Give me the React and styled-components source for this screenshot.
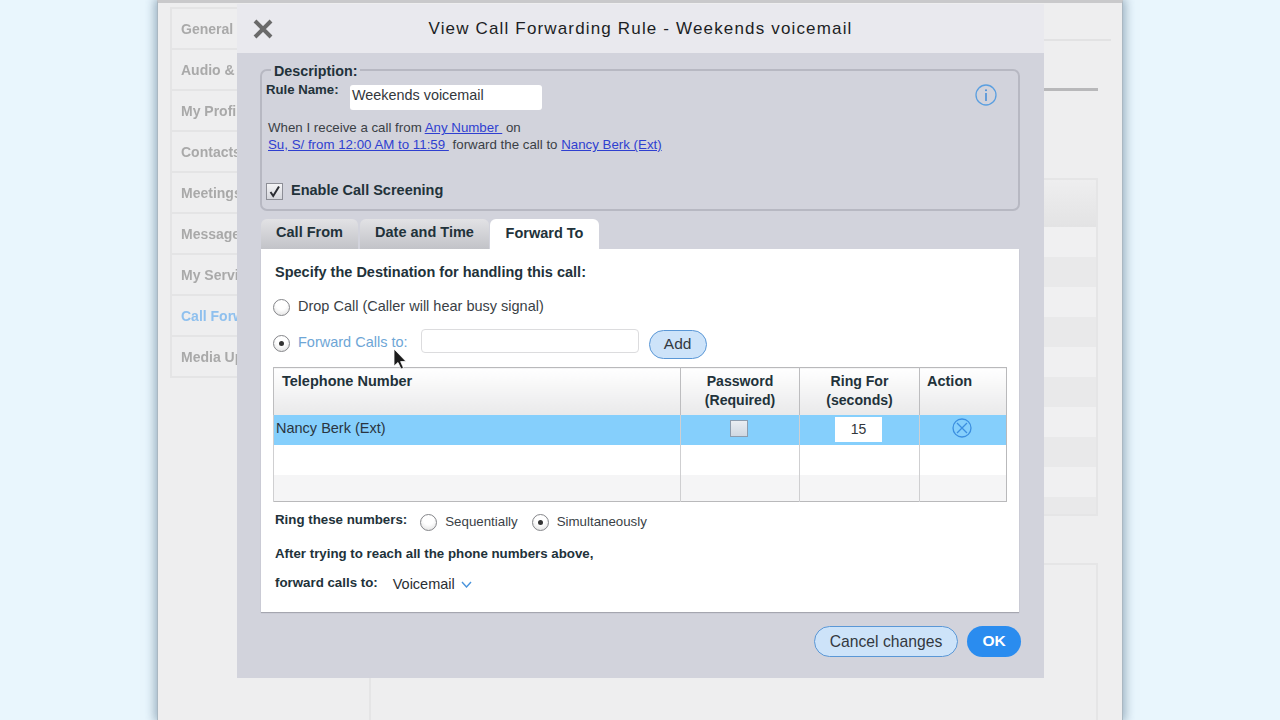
import React from "react";
import styled, { createGlobalStyle } from "styled-components";

const GlobalStyle = createGlobalStyle`
  html, body {
    margin: 0;
    height: 100%;
    overflow: hidden;
    background: #e9f6fd;
    font-family: "Liberation Sans", Arial, sans-serif;
  }
`;

const Stage = styled.div`
  position: relative;
  width: 1280px;
  height: 720px;
  overflow: hidden;
`;
const Win = styled.div`
  box-sizing: border-box;
  width: 966px;
  height: 720px;
  margin-left: 157px;
  display: flex;
  background: #eeeeef;
  border-top: 3px solid #c9c9cb;
  border-left: 1px solid #aab8c2;
  border-right: 1px solid #aab8c2;
  box-shadow: 0 0 10px 2px rgba(120, 145, 165, 0.75);
`;
const Nav = styled.div`
  width: 180px;
  margin: 4px 0 0 12px;
  filter: blur(0.6px);
  flex-shrink: 0;
`;
const NavItem = styled.div`
  box-sizing: border-box;
  height: ${p => (p.$first ? "43px" : "41px")};
  padding-left: 9px;
  line-height: 40px;
  font-size: 14px;
  font-weight: bold;
  white-space: nowrap;
  color: ${p => (p.$active ? "#8fc0ee" : "#a9a9a9")};
  border: 2px solid #e4e4e5;
  border-right: 0;
  border-top-width: ${p => (p.$first ? "2px" : "0")};
`;
const Back = styled.div`
  flex: 1;
  padding-right: 24px;
  filter: blur(0.6px);
`;
const BackLine = styled.div`
  height: ${p => p.$h}px;
  margin-top: ${p => p.$top}px;
  margin-right: ${p => p.$right}px;
  background: ${p => p.$color};
`;
const BackTable = styled.div`
  box-sizing: border-box;
  height: 338px;
  margin: 87px 0 0 19px;
  overflow: hidden;
  border: 2px solid #e5e5e6;
`;
const BackHead = styled.div`
  height: 47px;
  background: linear-gradient(#eeeeef, #e3e3e4);
`;
const BackRow = styled.div`
  height: 30px;
  background: ${p => (p.$alt ? "#e9e9ea" : "#f0f0f1")};
`;
const BackBox = styled.div`
  margin: 47px 0 0 19px;
  height: 160px;
  border: 2px solid #e5e5e6;
`;

const Dialog = styled.div`
  position: absolute;
  left: 237px;
  top: 4px;
  width: 807px;
  height: 674px;
  background: #d2d3dc;
`;
const Header = styled.div`
  position: relative;
  height: 49px;
  display: flex;
  align-items: center;
  justify-content: center;
  background: #e9e9ee;
  font-size: 17px;
  letter-spacing: 1.16px;
  color: #1c1e24;
`;
const CloseIcon = styled.svg`
  position: absolute;
  left: 16px;
  top: 15px;
`;
const Body = styled.div`
  padding: 16px 24px 0 23px;
`;
const Fieldset = styled.div`
  position: relative;
  box-sizing: border-box;
  height: 142px;
  padding: 10px 0 0 4px;
  border: 2px solid #b7b8c2;
  border-radius: 7px;
`;
const Legend = styled.div`
  position: absolute;
  left: 9px;
  top: -9px;
  padding: 0 3px;
  background: #d2d3dc;
  font-size: 14.3px;
  line-height: 18px;
  font-weight: bold;
  color: #22323a;
`;
const RuleRow = styled.div`
  display: flex;
  padding-right: 21px;
`;
const RuleLabel = styled.div`
  width: 84px;
  padding-top: 1px;
  font-size: 13.2px;
  line-height: 16px;
  font-weight: bold;
  color: #22323a;
`;
const RuleInput = styled.div`
  box-sizing: border-box;
  width: 192px;
  height: 25px;
  margin-top: 4px;
  padding-left: 2px;
  background: #fff;
  border-radius: 3px;
  font-size: 14.4px;
  line-height: 21px;
  color: #33373c;
`;
const InfoIcon = styled.svg`
  margin: 3px 0 0 auto;
`;
const Sentence = styled.div`
  margin: 9px 0 0 2px;
  font-size: 13.3px;
  line-height: 17px;
  color: #3a3f46;
  white-space: pre;
`;
const Lnk = styled.a`
  color: #2f3fd0;
  text-decoration: underline;
`;
const ScreenRow = styled.div`
  display: flex;
  align-items: center;
  gap: 8px;
  margin-top: 29px;
`;
const ScreenLabel = styled.span`
  padding-bottom: 2px;
  font-size: 14.5px;
  font-weight: bold;
  color: #22323a;
`;
const Check = styled.span`
  box-sizing: border-box;
  width: 17px;
  height: 17px;
  display: flex;
  align-items: center;
  justify-content: center;
  border: 1px solid #8d8e96;
  background: linear-gradient(#f4f4f6, #d5d6dc);
`;

const Tabs = styled.div`
  display: flex;
  gap: 2px;
  margin: 8px 0 0 1px;
  height: 30px;
`;
const Tab = styled.div`
  box-sizing: border-box;
  width: ${p => p.$w}px;
  height: ${p => (p.$active ? "31px" : "30px")};
  margin-left: ${p => (p.$active ? "-1px" : "0")};
  border-radius: 6px 6px 0 0;
  text-align: center;
  line-height: ${p => (p.$active ? "29px" : "27px")};
  font-size: 14.5px;
  font-weight: bold;
  color: #22323a;
  position: relative;
  z-index: ${p => (p.$active ? 1 : 0)};
  background: ${p => (p.$active ? "#fff" : "linear-gradient(#e2e2e5, #c2c3c8)")};
`;
const Panel = styled.div`
  box-sizing: border-box;
  height: 363px;
  margin: 0 1px;
  padding: 14px 12px 0 14px;
  background: #fff;
  box-shadow: 0 1px 1px #a5a6af;
`;
const Heading = styled.div`
  font-size: 14.5px;
  line-height: 18px;
  font-weight: bold;
  color: #22323a;
`;
const RadioRow = styled.div`
  display: flex;
  align-items: center;
  gap: 8px;
  height: ${p => p.$h}px;
  margin: ${p => p.$top}px 0 0 -2px;
`;
const Radio = styled.span`
  position: relative;
  flex-shrink: 0;
  box-sizing: border-box;
  width: 17px;
  height: 17px;
  border-radius: 50%;
  border: 1px solid #85868a;
  background: radial-gradient(circle at 50% 30%, #fff 40%, #dcdcdc);
  ${p =>
    p.$on &&
    `&::after {
      content: "";
      position: absolute;
      left: 5px;
      top: 5px;
      width: 5px;
      height: 5px;
      border-radius: 50%;
      background: #333;
    }`}
`;
const RadioText = styled.span`
  padding-bottom: 2px;
  font-size: ${p => p.$size || 14.5}px;
  color: ${p => p.$color || "#3a3f46"};
  white-space: nowrap;
`;
const ForwardInput = styled.div`
  box-sizing: border-box;
  width: 218px;
  height: 24px;
  margin: 1px 2px 0 5px;
  border: 1px solid #dcdcde;
  border-radius: 4px;
  align-self: flex-start;
`;
const PillBtn = styled.button`
  box-sizing: border-box;
  height: ${p => p.$h}px;
  width: ${p => p.$w}px;
  margin-top: ${p => p.$top || 0}px;
  padding: 0;
  border-radius: 16px;
  border: 1px solid #5a97d6;
  background: #cde3f9;
  font-family: inherit;
  font-size: ${p => p.$size}px;
  color: #33383f;
`;
const GridTable = styled.table`
  width: 733px;
  height: 134px;
  margin: 9px 0 0 -2px;
  border-collapse: collapse;
  table-layout: fixed;
  border: 1px solid #b9b9bb;
`;
const HeadCell = styled.th`
  box-sizing: border-box;
  height: 47px;
  padding: 4px 0 0 ${p => (p.$left ? `${p.$left}px` : "0")};
  vertical-align: top;
  text-align: ${p => (p.$left ? "left" : "center")};
  font-size: ${p => (p.$left ? "14.5px" : "14.1px")};
  line-height: 19px;
  color: #22323a;
  border-left: 1px solid #bdbdbf;
  background: linear-gradient(#fff, #e9e9ea);
`;
const BodyRow = styled.tr`
  height: ${p => p.$h}px;
`;
const Cell = styled.td`
  padding: 0;
  text-align: center;
  border-left: 1px solid #cfcfd1;
  background: ${p => p.$bg};
`;
const NameCell = styled(Cell)`
  padding: 0 0 3px 2px;
  text-align: left;
  font-size: 14.5px;
  color: #2a3540;
`;
const PassBox = styled.span`
  display: inline-block;
  box-sizing: border-box;
  width: 18px;
  height: 17px;
  vertical-align: middle;
  margin: 0 0 3px -3px;
  border: 1px solid #8b9cae;
  background: linear-gradient(#e9edf2, #cfd8e2);
`;
const RingInput = styled.span`
  display: inline-block;
  box-sizing: border-box;
  width: 47px;
  height: 25px;
  margin-left: -2px;
  background: #fff;
  font-size: 14px;
  line-height: 25px;
  color: #33373c;
  vertical-align: middle;
`;
const RemoveIcon = styled.svg`
  display: block;
  margin: -4px 0 0 32px;
`;
const RingRow = styled.div`
  display: flex;
  align-items: center;
  height: 22px;
  margin-top: 9px;
`;
const SmallBold = styled.div`
  font-size: 13.3px;
  line-height: 18px;
  font-weight: bold;
  color: #22323a;
  white-space: nowrap;
  margin-top: ${p => p.$top || 0}px;
  margin-right: ${p => p.$right || 0}px;
`;
const RingOption = styled.div`
  display: flex;
  align-items: center;
  gap: 8px;
  margin-right: 14px;
  padding-top: 1px;
`;
const VoiceRow = styled.div`
  display: flex;
  align-items: center;
  margin-top: 11px;
`;
const Voicemail = styled.div`
  display: flex;
  align-items: center;
  gap: 6px;
  font-size: 14.5px;
  color: #2a2e33;
  padding-top: 2px;
`;
const Footer = styled.div`
  display: flex;
  justify-content: flex-end;
  gap: 9px;
  margin: 14px -1px 0 0;
`;
const OkBtn = styled.button`
  width: 54px;
  height: 31px;
  padding: 0 0 2px;
  border: 0;
  border-radius: 16px;
  background: #2a8cef;
  color: #fff;
  font-family: inherit;
  font-size: 15.5px;
  font-weight: bold;
`;
const Cursor = styled.svg`
  position: absolute;
  left: 392px;
  top: 348px;
`;

const nav = ["General", "Audio & Video", "My Profile", "Contacts", "Meetings", "Messages", "My Services", "Call Forwarding", "Media Uploads"];
const stripes = [0, 1, 2, 3, 4, 5, 6, 7, 8, 9];

export default function App() {
  return (
    <Stage>
      <GlobalStyle />
      <Win>
        <Nav>
          {nav.map((n, i) => (
            <NavItem key={n} $first={i === 0} $active={n === "Call Forwarding"}>{n}</NavItem>
          ))}
        </Nav>
        <Back>
          <BackLine $h={2} $top={36} $right={-13} $color="#e2e2e3" />
          <BackLine $h={3} $top={47} $right={0} $color="#b8b8ba" />
          <BackTable>
            <BackHead />
            {stripes.map(i => <BackRow key={i} $alt={i % 2 === 1} />)}
          </BackTable>
          <BackBox />
        </Back>
      </Win>

      <Dialog>
        <Header>
          <CloseIcon width="20" height="20" viewBox="0 0 20 20">
            <path d="M2 2 L18 18 M18 2 L2 18" stroke="#6a6a6a" strokeWidth="4" fill="none" />
          </CloseIcon>
          View Call Forwarding Rule - Weekends voicemail
        </Header>
        <Body>
          <Fieldset>
            <Legend>Description:</Legend>
            <RuleRow>
              <RuleLabel>Rule Name:</RuleLabel>
              <RuleInput>Weekends voicemail</RuleInput>
              <InfoIcon width="22" height="22" viewBox="0 0 22 22">
                <circle cx="11" cy="11" r="10" fill="none" stroke="#5b9fe0" strokeWidth="1.3" />
                <circle cx="11" cy="6.2" r="1" fill="#4a90d9" />
                <path d="M11 9 V17" stroke="#4a90d9" strokeWidth="1.6" />
              </InfoIcon>
            </RuleRow>
            <Sentence>
              When I receive a call from <Lnk>Any Number </Lnk> on{"\n"}
              <Lnk>Su, S/ from 12:00 AM to 11:59 </Lnk> forward the call to <Lnk>Nancy Berk (Ext)</Lnk>
            </Sentence>
            <ScreenRow>
              <Check>
                <svg width="13" height="13" viewBox="0 0 13 13">
                  <path d="M2.5 7 L5.2 11 L11 1.5" stroke="#2b2d33" strokeWidth="2" fill="none" />
                </svg>
              </Check>
              <ScreenLabel>Enable Call Screening</ScreenLabel>
            </ScreenRow>
          </Fieldset>

          <Tabs>
            <Tab $w={97}>Call From</Tab>
            <Tab $w={129}>Date and Time</Tab>
            <Tab $w={109} $active>Forward To</Tab>
          </Tabs>
          <Panel>
            <Heading>Specify the Destination for handling this call:</Heading>
            <RadioRow $h={18} $top={17}>
              <Radio />
              <RadioText>Drop Call (Caller will hear busy signal)</RadioText>
            </RadioRow>
            <RadioRow $h={30} $top={12}>
              <Radio $on />
              <RadioText $color="#6ea6d6">Forward Calls to:</RadioText>
              <ForwardInput />
              <PillBtn $w={58} $h={29} $top={2} $size={15.5}>Add</PillBtn>
            </RadioRow>
            <GridTable>
              <colgroup>
                <col width="407" />
                <col width="119" />
                <col width="120" />
                <col width="87" />
              </colgroup>
              <thead>
                <tr>
                  <HeadCell $left={8}>Telephone Number</HeadCell>
                  <HeadCell>Password<br />(Required)</HeadCell>
                  <HeadCell>Ring For<br />(seconds)</HeadCell>
                  <HeadCell $left={7}>Action</HeadCell>
                </tr>
              </thead>
              <tbody>
                <BodyRow $h={30}>
                  <NameCell $bg="#85cffc">Nancy Berk (Ext)</NameCell>
                  <Cell $bg="#85cffc"><PassBox /></Cell>
                  <Cell $bg="#85cffc"><RingInput>15</RingInput></Cell>
                  <Cell $bg="#85cffc">
                    <RemoveIcon width="20" height="20" viewBox="0 0 20 20">
                      <circle cx="10" cy="10" r="9" fill="none" stroke="#3c8fe0" strokeWidth="1.3" />
                      <path d="M5 5 L15 15 M15 5 L5 15" stroke="#3c8fe0" strokeWidth="1.3" />
                    </RemoveIcon>
                  </Cell>
                </BodyRow>
                <BodyRow $h={30}>
                  <Cell $bg="#fff" /><Cell $bg="#fff" /><Cell $bg="#fff" /><Cell $bg="#fff" />
                </BodyRow>
                <BodyRow $h={27}>
                  <Cell $bg="#f5f5f6" /><Cell $bg="#f5f5f6" /><Cell $bg="#f5f5f6" /><Cell $bg="#f5f5f6" />
                </BodyRow>
              </tbody>
            </GridTable>
            <RingRow>
              <SmallBold $right={13} $top={-4}>Ring these numbers:</SmallBold>
              <RingOption>
                <Radio />
                <RadioText $size={13.3}>Sequentially</RadioText>
              </RingOption>
              <RingOption>
                <Radio $on />
                <RadioText $size={13.3}>Simultaneously</RadioText>
              </RingOption>
            </RingRow>
            <SmallBold $top={12}>After trying to reach all the phone numbers above,</SmallBold>
            <VoiceRow>
              <SmallBold $right={15}>forward calls to:</SmallBold>
              <Voicemail>
                Voicemail
                <svg width="11" height="7" viewBox="0 0 11 7">
                  <path d="M1 1 L5.5 6 L10 1" stroke="#4a94dc" strokeWidth="1.4" fill="none" />
                </svg>
              </Voicemail>
            </VoiceRow>
          </Panel>
          <Footer>
            <PillBtn $w={144} $h={31} $size={15.7}>Cancel changes</PillBtn>
            <OkBtn>OK</OkBtn>
          </Footer>
        </Body>
      </Dialog>

      <Cursor width="16" height="24" viewBox="0 0 16 24">
        <path d="M2 1 L2 18 L6 14.5 L9 21 L11.5 20 L8.6 13.6 L14 13.4 Z" fill="#1c1c1c" stroke="#fff" strokeWidth="0.8" />
      </Cursor>
    </Stage>
  );
}
